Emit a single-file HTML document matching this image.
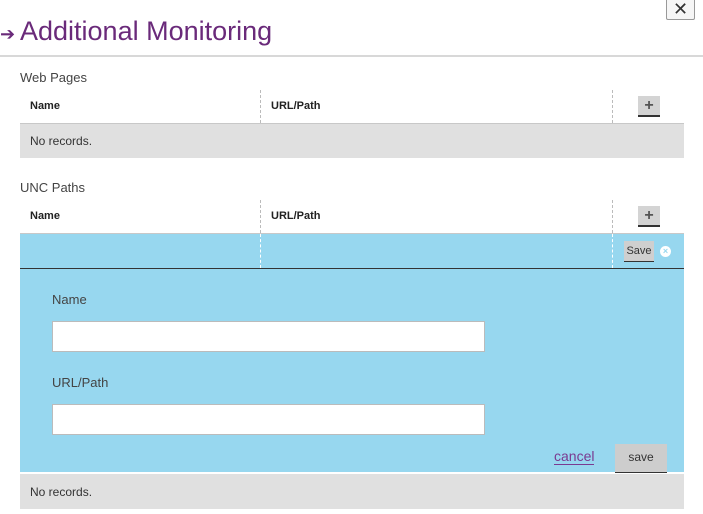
<!DOCTYPE html>
<html><head><style>
*{margin:0;padding:0;box-sizing:border-box}
body{width:703px;height:514px;background:#fff;font-family:"Liberation Sans",sans-serif;color:#333;position:relative;overflow:hidden}
.a{position:absolute}
.t{font-size:11px;color:#222;font-weight:bold}
.dash{position:absolute;border-left:1px dashed #bbb}
.plus{position:absolute;width:22px;height:21px;background:#d4d4d4;border-bottom:2px solid #333;color:#555;font-weight:bold;font-size:16px;text-align:center;line-height:19px}
input{position:absolute;border:1px solid #bbb;background:#fff}
</style></head><body>
<div class="a" style="left:666px;top:-2px;width:29px;height:22px;border:1px solid #999;border-radius:2px;background:#f6f6f6;text-align:center;font-size:18px;line-height:20px;color:#333">✕</div>
<div class="a" style="left:0;top:24px;font-size:18px;color:#6a2a7a">➔</div>
<div class="a" style="left:20px;top:16px;font-size:27px;color:#6a2a7a;white-space:nowrap">Additional Monitoring</div>
<div class="a" style="left:0;top:55px;width:703px;height:2px;background:#d8d8d8"></div>

<div class="a" style="left:20px;top:70px;font-size:13px;color:#444">Web Pages</div>
<div class="a t" style="left:30px;top:100px">Name</div>
<div class="a t" style="left:271px;top:100px">URL/Path</div>
<div class="dash" style="left:260px;top:90px;height:33px"></div>
<div class="dash" style="left:612px;top:90px;height:33px"></div>
<div class="plus" style="left:638px;top:96px">+</div>
<div class="a" style="left:20px;top:123px;width:664px;height:35px;background:#e0e0e0;border-top:1px solid #c8c8c8"></div>
<div class="a" style="left:30px;top:134px;color:#333;font-size:12px">No records.</div>

<div class="a" style="left:20px;top:180px;font-size:13px;color:#444">UNC Paths</div>
<div class="a t" style="left:30px;top:210px">Name</div>
<div class="a t" style="left:271px;top:210px">URL/Path</div>
<div class="dash" style="left:260px;top:200px;height:33px"></div>
<div class="dash" style="left:612px;top:200px;height:33px"></div>
<div class="plus" style="left:638px;top:206px">+</div>
<div class="a" style="left:20px;top:233px;width:664px;height:36px;background:#97d7ef;border-top:1px solid #c8c8c8;border-bottom:1px solid #333"></div>
<div class="dash" style="left:260px;top:234px;height:34px;border-color:#fff"></div>
<div class="dash" style="left:612px;top:234px;height:34px;border-color:#fff"></div>
<div class="a" style="left:624px;top:241px;width:30px;height:21px;background:#cfcfcf;border-bottom:1px solid #333;font-size:11px;line-height:20px;text-align:center;color:#333">Save</div>
<div class="a" style="left:660px;top:246px;width:11px;height:11px;border-radius:50%;background:#fff;color:#97d7ef;font-size:9px;line-height:11px;text-align:center;font-weight:bold">×</div>
<div class="a" style="left:20px;top:269px;width:664px;height:203px;background:#97d7ef"></div>
<div class="a" style="left:52px;top:292px;font-size:13px;color:#444">Name</div>
<input style="left:52px;top:321px;width:433px;height:31px">
<div class="a" style="left:52px;top:375px;font-size:13px;color:#444">URL/Path</div>
<input style="left:52px;top:404px;width:433px;height:31px">
<div class="a" style="left:554px;top:448px;font-size:14px;color:#7a3a90;border-bottom:1px solid #7a3a90;line-height:16px">cancel</div>
<div class="a" style="left:615px;top:444px;width:52px;height:29px;background:#cdcdcd;border-bottom:1px solid #333;font-size:12px;text-align:center;line-height:27px;color:#333">save</div>
<div class="a" style="left:20px;top:474px;width:664px;height:35px;background:#e0e0e0"></div>
<div class="a" style="left:30px;top:485px;font-size:12px;color:#333">No records.</div>
</body></html>
